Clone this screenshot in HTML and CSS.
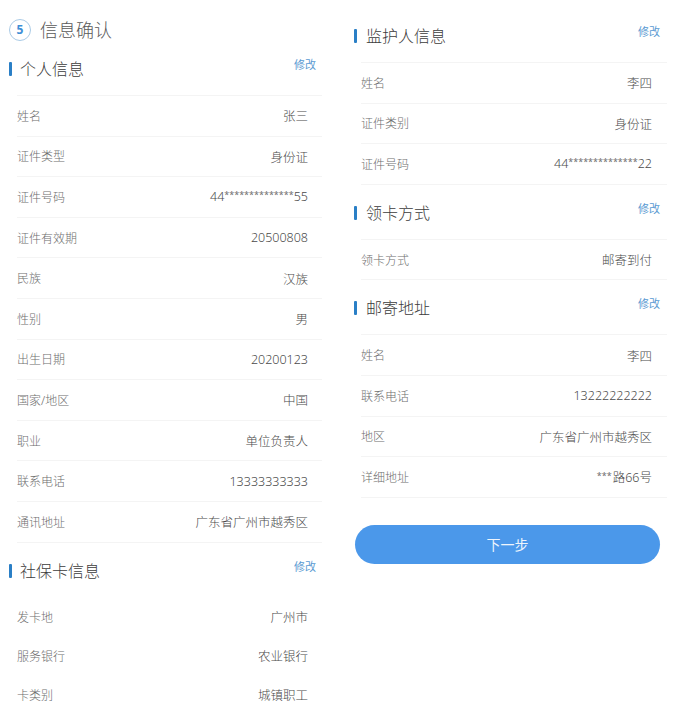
FILE: index.html
```html
<!DOCTYPE html>
<html lang="zh-CN">
<head>
<meta charset="utf-8">
<title>信息确认</title>
<link rel="stylesheet" href="styles.css">
</head>
<body>
<div class="page">
  <div class="col col-left">
    <div class="title">
      <span class="step">5</span>
      <span class="title-text">信息确认</span>
    </div>

    <section class="section">
      <div class="sec-head"><span class="bar"></span><span class="sec-title">个人信息</span><span class="edit">修改</span></div>
      <div class="list">
        <div class="row"><span class="label">姓名</span><span class="value">张三</span></div>
        <div class="row"><span class="label">证件类型</span><span class="value">身份证</span></div>
        <div class="row"><span class="label">证件号码</span><span class="value">44<span class="mask">**************</span>55</span></div>
        <div class="row"><span class="label">证件有效期</span><span class="value">20500808</span></div>
        <div class="row"><span class="label">民族</span><span class="value">汉族</span></div>
        <div class="row"><span class="label">性别</span><span class="value">男</span></div>
        <div class="row"><span class="label">出生日期</span><span class="value">20200123</span></div>
        <div class="row"><span class="label">国家/地区</span><span class="value">中国</span></div>
        <div class="row"><span class="label">职业</span><span class="value">单位负责人</span></div>
        <div class="row"><span class="label">联系电话</span><span class="value">13333333333</span></div>
        <div class="row"><span class="label">通讯地址</span><span class="value">广东省广州市越秀区</span></div>
      </div>
    </section>

    <section class="section">
      <div class="sec-head"><span class="bar"></span><span class="sec-title">社保卡信息</span><span class="edit">修改</span></div>
      <div class="list list-plain">
        <div class="row row-compact"><span class="label">发卡地</span><span class="value">广州市</span></div>
        <div class="row row-compact"><span class="label">服务银行</span><span class="value">农业银行</span></div>
        <div class="row row-compact"><span class="label">卡类别</span><span class="value">城镇职工</span></div>
      </div>
    </section>
  </div>

  <div class="col col-right">
    <section class="section first">
      <div class="sec-head"><span class="bar"></span><span class="sec-title">监护人信息</span><span class="edit">修改</span></div>
      <div class="list">
        <div class="row"><span class="label">姓名</span><span class="value">李四</span></div>
        <div class="row"><span class="label">证件类别</span><span class="value">身份证</span></div>
        <div class="row"><span class="label">证件号码</span><span class="value">44<span class="mask">**************</span>22</span></div>
      </div>
    </section>

    <section class="section">
      <div class="sec-head"><span class="bar"></span><span class="sec-title">领卡方式</span><span class="edit">修改</span></div>
      <div class="list">
        <div class="row"><span class="label">领卡方式</span><span class="value">邮寄到付</span></div>
      </div>
    </section>

    <section class="section">
      <div class="sec-head"><span class="bar"></span><span class="sec-title">邮寄地址</span><span class="edit">修改</span></div>
      <div class="list">
        <div class="row"><span class="label">姓名</span><span class="value">李四</span></div>
        <div class="row"><span class="label">联系电话</span><span class="value">13222222222</span></div>
        <div class="row"><span class="label">地区</span><span class="value">广东省广州市越秀区</span></div>
        <div class="row"><span class="label">详细地址</span><span class="value"><span class="mask mask-gap">***</span><span class="cjk">路</span>66<span class="cjk">号</span></span></div>
      </div>
    </section>

    <button class="next" type="button">下一步</button>
  </div>
</div>
</body>
</html>
```

FILE: styles.css
```css
* { box-sizing: border-box; }

html, body {
  margin: 0;
  padding: 0;
  background: #ffffff;
}

body {
  font-family: "Noto Sans", "Noto Sans CJK SC", sans-serif;
  color: #444;
}

.page {
  display: flex;
  gap: 32px;
  padding-left: 9px;
  width: 677px;
}

.col {
  width: 313px;
  flex: none;
  display: flex;
  flex-direction: column;
}

.col-left { padding-top: 10px; }
.col-right { padding-top: 17px; }

.title {
  height: 40px;
  display: flex;
  align-items: center;
}

.step {
  width: 22px;
  height: 22px;
  border: 1.5px solid #aacbe6;
  border-radius: 50%;
  display: flex;
  align-items: center;
  justify-content: center;
  color: #3f8fd6;
  font-size: 12px;
  font-weight: 700;
  line-height: 1;
  margin-right: 9px;
}

.title-text {
  font-size: 18px;
  font-weight: 300;
  color: #5a5a5a;
  line-height: 1;
}

.section { margin-top: 9px; }
.title + .section { margin-top: 0; }
.section.first { margin-top: 0; }

.sec-head {
  height: 38px;
  display: flex;
  align-items: center;
  margin-bottom: 7px;
  padding-right: 6px;
}

.col-right .sec-head { padding-right: 7px; }

.bar {
  width: 3px;
  height: 14px;
  background: #2a7fc6;
  border-radius: 1px;
  margin-right: 8px;
}

.col-right .bar { margin-right: 9px; }

.sec-title {
  font-size: 16px;
  font-weight: 300;
  color: #3c3c3c;
  line-height: 1;
  flex: 1;
}

.edit {
  font-size: 11px;
  color: #5a9ad2;
  align-self: flex-start;
  margin-top: 9px;
  line-height: 1;
}

.list {
  margin-left: 8px;
  border-top: 1px solid #f4f4f4;
}

.col-right .list { margin-left: 7px; }

.row {
  height: 40.6px;
  display: flex;
  align-items: center;
  justify-content: space-between;
  padding-right: 14px;
  border-bottom: 1px solid #f4f4f4;
}

.col-right .row { padding-right: 15px; }

.list-plain { border-top-color: transparent; }
.list-plain .row { border-bottom-color: transparent; }
.row-compact { height: 39px; }

.label {
  font-size: 12px;
  font-weight: 300;
  color: #6e6e6e;
}

.value {
  font-size: 12.5px;
  font-weight: 300;
  color: #4a4a4a;
  white-space: nowrap;
}

.mask {
  display: inline-block;
  font-weight: 400;
  font-size: 9px;
  vertical-align: 3px;
  color: #6e6e6e;
}

.mask-gap { margin-right: 1px; }

.cjk {
  font-family: "Noto Sans CJK SC", sans-serif;
}

.next {
  margin-top: 27px;
  width: 305px;
  height: 39px;
  margin-left: 1px;
  border: none;
  border-radius: 20px;
  background: #4b98ea;
  color: #eef5fd;
  font-family: "Noto Sans CJK SC", sans-serif;
  font-size: 14px;
  cursor: pointer;
}
```
